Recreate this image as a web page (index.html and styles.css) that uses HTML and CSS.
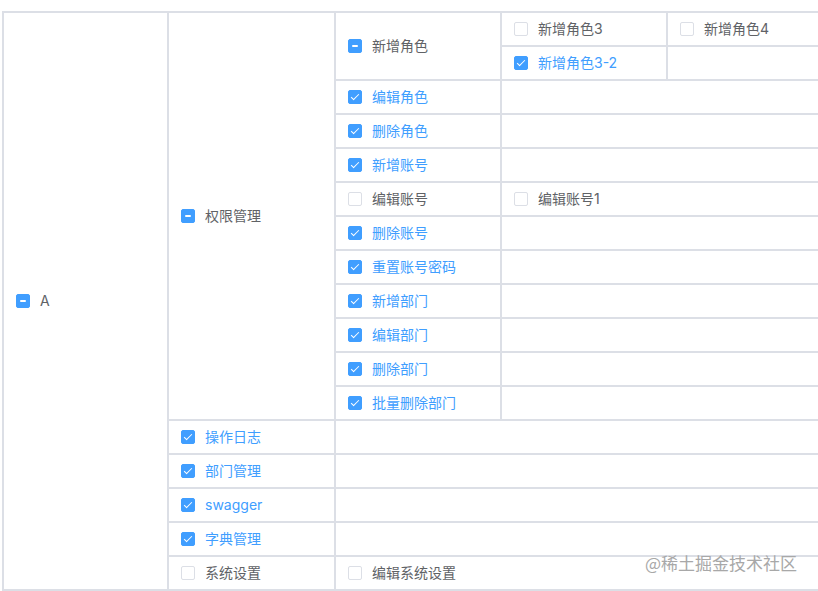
FILE: index.html
```html
<!DOCTYPE html>
<html lang="zh-CN">
<head>
<meta charset="utf-8">
<title>权限树</title>
<link rel="stylesheet" href="styles.css">
</head>
<body>
<div class="wrap">
  <table class="tree">
    <colgroup>
      <col class="c1"><col class="c2"><col class="c3"><col class="c4"><col class="c5">
    </colgroup>
    <tbody>
      <tr>
        <td rowspan="17"><label class="cb ind"><span class="box"></span><span class="txt">A</span></label></td>
        <td rowspan="12"><label class="cb ind"><span class="box"></span><span class="txt">权限管理</span></label></td>
        <td rowspan="2"><label class="cb ind"><span class="box"></span><span class="txt">新增角色</span></label></td>
        <td><label class="cb"><span class="box"></span><span class="txt">新增角色3</span></label></td>
        <td><label class="cb"><span class="box"></span><span class="txt">新增角色4</span></label></td>
      </tr>
      <tr>
        <td><label class="cb on"><span class="box"></span><span class="txt">新增角色3-2</span></label></td>
        <td></td>
      </tr>
      <tr>
        <td><label class="cb on"><span class="box"></span><span class="txt">编辑角色</span></label></td>
        <td colspan="2"></td>
      </tr>
      <tr>
        <td><label class="cb on"><span class="box"></span><span class="txt">删除角色</span></label></td>
        <td colspan="2"></td>
      </tr>
      <tr>
        <td><label class="cb on"><span class="box"></span><span class="txt">新增账号</span></label></td>
        <td colspan="2"></td>
      </tr>
      <tr>
        <td><label class="cb"><span class="box"></span><span class="txt">编辑账号</span></label></td>
        <td colspan="2"><label class="cb"><span class="box"></span><span class="txt">编辑账号1</span></label></td>
      </tr>
      <tr>
        <td><label class="cb on"><span class="box"></span><span class="txt">删除账号</span></label></td>
        <td colspan="2"></td>
      </tr>
      <tr>
        <td><label class="cb on"><span class="box"></span><span class="txt">重置账号密码</span></label></td>
        <td colspan="2"></td>
      </tr>
      <tr>
        <td><label class="cb on"><span class="box"></span><span class="txt">新增部门</span></label></td>
        <td colspan="2"></td>
      </tr>
      <tr>
        <td><label class="cb on"><span class="box"></span><span class="txt">编辑部门</span></label></td>
        <td colspan="2"></td>
      </tr>
      <tr>
        <td><label class="cb on"><span class="box"></span><span class="txt">删除部门</span></label></td>
        <td colspan="2"></td>
      </tr>
      <tr>
        <td><label class="cb on"><span class="box"></span><span class="txt">批量删除部门</span></label></td>
        <td colspan="2"></td>
      </tr>
      <tr>
        <td><label class="cb on"><span class="box"></span><span class="txt">操作日志</span></label></td>
        <td colspan="3"></td>
      </tr>
      <tr>
        <td><label class="cb on"><span class="box"></span><span class="txt">部门管理</span></label></td>
        <td colspan="3"></td>
      </tr>
      <tr>
        <td><label class="cb on"><span class="box"></span><span class="txt">swagger</span></label></td>
        <td colspan="3"></td>
      </tr>
      <tr>
        <td><label class="cb on"><span class="box"></span><span class="txt">字典管理</span></label></td>
        <td colspan="3"></td>
      </tr>
      <tr>
        <td><label class="cb"><span class="box"></span><span class="txt">系统设置</span></label></td>
        <td colspan="3"><label class="cb"><span class="box"></span><span class="txt">编辑系统设置</span></label></td>
      </tr>
    </tbody>
  </table>
  <div class="watermark">@稀土掘金技术社区</div>
</div>
</body>
</html>
```

FILE: styles.css
```css
html, body {
  margin: 0;
  padding: 0;
  background: #fff;
}

.wrap {
  position: relative;
  width: 818px;
  height: 591px;
  overflow: hidden;
  padding: 11px 0 0 2px;
  box-sizing: border-box;
  font-family: "Inter", "Noto Sans CJK SC", sans-serif;
  font-size: 14px;
  color: #606266;
}

.tree {
  border-collapse: collapse;
  table-layout: fixed;
  width: 831px;
}

.tree .c1 { width: 165px; }
.tree .c2 { width: 167px; }
.tree .c3 { width: 166px; }
.tree .c4 { width: 166px; }
.tree .c5 { width: 167px; }

.tree td {
  border: 2px solid #dcdfe6;
  height: 34px;
  padding: 0 0 0 12px;
  vertical-align: middle;
  box-sizing: border-box;
}

.cb {
  display: inline-flex;
  align-items: center;
  white-space: nowrap;
  cursor: pointer;
}

.box {
  position: relative;
  width: 14px;
  height: 14px;
  box-sizing: border-box;
  border: 1px solid #dcdfe6;
  border-radius: 2px;
  background: #fff;
  flex: none;
}

.txt {
  padding-left: 10px;
  line-height: 20px;
}

.on .box,
.ind .box {
  background: #409eff;
  border-color: #409eff;
}

.on .txt {
  color: #409eff;
}

.on .box::after {
  content: "";
  position: absolute;
  left: 4px;
  top: 1px;
  width: 3px;
  height: 7px;
  border: 1px solid #fff;
  border-left: 0;
  border-top: 0;
  transform: rotate(45deg);
}

.ind .box::before {
  content: "";
  position: absolute;
  left: 3px;
  right: 3px;
  top: 5px;
  height: 2px;
  background: #fff;
  border-radius: 1px;
}

.watermark {
  position: absolute;
  left: 645px;
  top: 550px;
  font-family: "Noto Sans CJK SC", sans-serif;
  font-size: 17px;
  line-height: 26px;
  color: #a8a8a8;
  letter-spacing: 0;
  pointer-events: none;
}
```
